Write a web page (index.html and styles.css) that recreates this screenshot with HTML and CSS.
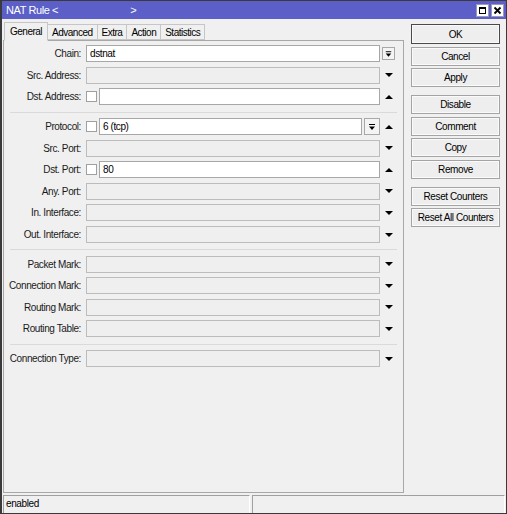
FILE: index.html
```html
<!DOCTYPE html>
<html lang="en">
<head>
    <meta charset="UTF-8">
    <title>NAT Rule</title>
    <link rel="stylesheet" href="styles.css">
</head>
<body>
    <div class="window">
        <div class="titleBar">
            <span class="title">NAT Rule &lt;</span>
            <span class="titleEnd">&gt;</span>
            <span class="winBtn">
                <svg width="11" height="11" viewBox="0 0 11 11"><rect x="2.5" y="2.5" width="6" height="6" fill="none" stroke="#000"/><line x1="2" y1="3" x2="9" y2="3" stroke="#000" stroke-width="2"/></svg>
            </span>
            <span class="winBtn">
                <svg width="11" height="11" viewBox="0 0 11 11"><path d="M2.5 2.5 L8.5 8.5 M8.5 2.5 L2.5 8.5" stroke="#000" stroke-width="1.8"/></svg>
            </span>
        </div>

        <div class="main">
            <div class="leftCol">
                <ul class="tabs">
                    <li class="active">General</li>
                    <li>Advanced</li>
                    <li>Extra</li>
                    <li>Action</li>
                    <li>Statistics</li>
                </ul>
                <div class="panel">
                    <div class="group">
                        <div class="row">
                            <label>Chain:</label>
                            <div class="cell"><div class="field on">dstnat</div></div>
                            <span class="combo"><svg width="12" height="12" viewBox="0 0 12 12"><line x1="3" y1="3.5" x2="9" y2="3.5" stroke="#000"/><polygon points="3,5.5 9,5.5 6,9" fill="#000"/></svg></span>
                        </div>
                        <div class="row">
                            <label>Src. Address:</label>
                            <div class="cell"><div class="field"></div></div>
                            <span class="arrow"><svg width="15" height="10" viewBox="0 0 15 10"><polygon points="3,3 11,3 7,7" fill="#000"/></svg></span>
                        </div>
                        <div class="row">
                            <label>Dst. Address:</label>
                            <div class="cell"><span class="check"></span><div class="field on"></div></div>
                            <span class="arrow"><svg width="15" height="10" viewBox="0 0 15 10"><polygon points="3,7 11,7 7,3" fill="#000"/></svg></span>
                        </div>
                    </div>
                    <div class="divider"></div>
                    <div class="group">
                        <div class="row">
                            <label>Protocol:</label>
                            <div class="cell"><span class="check"></span><div class="field on">6 (tcp)</div><span class="combo wide"><svg width="12" height="12" viewBox="0 0 12 12"><line x1="3" y1="3.5" x2="9" y2="3.5" stroke="#000"/><polygon points="3,5.5 9,5.5 6,9" fill="#000"/></svg></span></div>
                            <span class="arrow"><svg width="15" height="10" viewBox="0 0 15 10"><polygon points="3,7 11,7 7,3" fill="#000"/></svg></span>
                        </div>
                        <div class="row">
                            <label>Src. Port:</label>
                            <div class="cell"><div class="field"></div></div>
                            <span class="arrow"><svg width="15" height="10" viewBox="0 0 15 10"><polygon points="3,3 11,3 7,7" fill="#000"/></svg></span>
                        </div>
                        <div class="row">
                            <label>Dst. Port:</label>
                            <div class="cell"><span class="check"></span><div class="field on">80</div></div>
                            <span class="arrow"><svg width="15" height="10" viewBox="0 0 15 10"><polygon points="3,7 11,7 7,3" fill="#000"/></svg></span>
                        </div>
                        <div class="row">
                            <label>Any. Port:</label>
                            <div class="cell"><div class="field"></div></div>
                            <span class="arrow"><svg width="15" height="10" viewBox="0 0 15 10"><polygon points="3,3 11,3 7,7" fill="#000"/></svg></span>
                        </div>
                        <div class="row">
                            <label>In. Interface:</label>
                            <div class="cell"><div class="field"></div></div>
                            <span class="arrow"><svg width="15" height="10" viewBox="0 0 15 10"><polygon points="3,3 11,3 7,7" fill="#000"/></svg></span>
                        </div>
                        <div class="row">
                            <label>Out. Interface:</label>
                            <div class="cell"><div class="field"></div></div>
                            <span class="arrow"><svg width="15" height="10" viewBox="0 0 15 10"><polygon points="3,3 11,3 7,7" fill="#000"/></svg></span>
                        </div>
                    </div>
                    <div class="divider"></div>
                    <div class="group">
                        <div class="row">
                            <label>Packet Mark:</label>
                            <div class="cell"><div class="field"></div></div>
                            <span class="arrow"><svg width="15" height="10" viewBox="0 0 15 10"><polygon points="3,3 11,3 7,7" fill="#000"/></svg></span>
                        </div>
                        <div class="row">
                            <label>Connection Mark:</label>
                            <div class="cell"><div class="field"></div></div>
                            <span class="arrow"><svg width="15" height="10" viewBox="0 0 15 10"><polygon points="3,3 11,3 7,7" fill="#000"/></svg></span>
                        </div>
                        <div class="row">
                            <label>Routing Mark:</label>
                            <div class="cell"><div class="field"></div></div>
                            <span class="arrow"><svg width="15" height="10" viewBox="0 0 15 10"><polygon points="3,3 11,3 7,7" fill="#000"/></svg></span>
                        </div>
                        <div class="row">
                            <label>Routing Table:</label>
                            <div class="cell"><div class="field"></div></div>
                            <span class="arrow"><svg width="15" height="10" viewBox="0 0 15 10"><polygon points="3,3 11,3 7,7" fill="#000"/></svg></span>
                        </div>
                    </div>
                    <div class="divider"></div>
                    <div class="group">
                        <div class="row">
                            <label>Connection Type:</label>
                            <div class="cell"><div class="field"></div></div>
                            <span class="arrow"><svg width="15" height="10" viewBox="0 0 15 10"><polygon points="3,3 11,3 7,7" fill="#000"/></svg></span>
                        </div>
                    </div>
                </div>
            </div>

            <div class="rightCol">
                <div class="btnGroup">
                    <button class="btn default">OK</button>
                    <button class="btn">Cancel</button>
                    <button class="btn">Apply</button>
                </div>
                <div class="btnGroup">
                    <button class="btn">Disable</button>
                    <button class="btn">Comment</button>
                    <button class="btn">Copy</button>
                    <button class="btn">Remove</button>
                </div>
                <div class="btnGroup">
                    <button class="btn">Reset Counters</button>
                    <button class="btn">Reset All Counters</button>
                </div>
            </div>
        </div>

        <div class="statusBar">
            <div class="statusBox first">enabled</div>
            <div class="statusBox"></div>
        </div>
    </div>
</body>
</html>
```

FILE: styles.css
```css
html, body {
    margin: 0;
    padding: 0;
    width: 507px;
    height: 514px;
    overflow: hidden;
    background-color: #f0f0f0;
}
body {
    font-family: "Liberation Sans", Arial, sans-serif;
    font-size: 10px;
    letter-spacing: -0.4px;
    color: #000;
}
.window {
    box-sizing: border-box;
    width: 507px;
    height: 514px;
    border: 1px solid #3a3a3a;
    border-left-width: 2px;
    display: flex;
    flex-direction: column;
    background-color: #f0f0f0;
}
.titleBar {
    height: 18px;
    flex: none;
    display: flex;
    align-items: center;
    background-color: #5b5fc7;
    color: #fff;
    font-size: 11px;
    padding-left: 4px;
}
.titleEnd {
    margin-left: 72px;
}
.winBtn {
    width: 11px;
    height: 11px;
    background-color: #fff;
    outline: 1px solid #9a9ab8;
    display: flex;
}
.titleEnd + .winBtn {
    margin-left: auto;
    margin-right: 4px;
}
.winBtn:last-child {
    margin-right: 3px;
}
.main {
    flex: 1;
    display: flex;
    min-height: 0;
}
.leftCol {
    width: 401px;
    margin-left: 1px;
    display: flex;
    flex-direction: column;
}
.tabs {
    list-style: none;
    margin: 0;
    padding: 3px 0 0 1px;
    display: flex;
    align-items: flex-end;
    position: relative;
    z-index: 2;
}
.tabs li {
    box-sizing: border-box;
    height: 16px;
    line-height: 15px;
    padding: 0 4px;
    letter-spacing: -0.5px;
    border: 1px solid #c6c6c6;
    border-left: none;
    background-color: #f0f0f0;
}
.tabs li.active {
    height: 19px;
    line-height: 17px;
    border-left: 1px solid #c6c6c6;
    border-bottom-color: #f0f0f0;
    padding: 0 5px;
    margin-bottom: -1px;
}
.panel {
    flex: 1;
    border: 1px solid #a8a8a8;
    margin-bottom: 1px;
}
.group {
    padding: 2px 0 4px;
}
.divider + .group {
    padding-top: 3px;
}
.divider {
    border-top: 1px solid #dadada;
    margin: 0 6px;
}
.row {
    height: 21.6px;
    display: grid;
    grid-template-columns: 77px 294px 16px;
    column-gap: 5px;
    align-items: center;
}
.row label {
    text-align: right;
    white-space: nowrap;
    color: #1a1a1a;
}
.row .arrow,
.row .combo {
    margin-left: -3px;
}
.cell {
    display: flex;
    align-items: center;
    gap: 2px;
}
.field {
    flex: 1;
    box-sizing: border-box;
    height: 17px;
    line-height: 15px;
    padding-left: 3px;
    border: 1px solid #bcbcbc;
    background-color: #efefef;
}
.field.on {
    background-color: #fff;
    border-color: #a7a7a7;
}
.check {
    box-sizing: border-box;
    width: 11px;
    height: 11px;
    border: 1px solid #a0a0a0;
    background-color: #fff;
}
.combo {
    box-sizing: border-box;
    width: 13px;
    height: 13px;
    border: 1px solid #a8a8a8;
    background-color: #f4f4f4;
    display: flex;
    align-items: center;
    justify-content: center;
}
.combo.wide {
    width: 16px;
    height: 17px;
    margin-left: 0;
}
.arrow {
    display: flex;
    align-items: center;
}
.rightCol {
    flex: 1;
    padding: 5px 5px 0 7px;
}
.btnGroup {
    display: flex;
    flex-direction: column;
    gap: 2.5px;
    margin-bottom: 8px;
}
.btn {
    box-sizing: border-box;
    height: 19px;
    width: 89px;
    padding: 0;
    font-family: "Liberation Sans", Arial, sans-serif;
    font-size: 10px;
    letter-spacing: -0.4px;
    color: #000;
    background-color: #eeeeee;
    border: 1px solid #a4a4a4;
    box-shadow: inset 0 0 0 1px #fafafa;
}
.btn.default {
    height: 20px;
    border-color: #4a4a4a;
}
.statusBar {
    flex: none;
    height: 18px;
    display: flex;
    gap: 2px;
    padding: 1px 1px 0 1px;
}
.statusBox {
    flex: 1;
    box-sizing: border-box;
    border-top: 1px solid #a0a0a0;
    border-left: 1px solid #a0a0a0;
    border-right: 1px solid #fff;
    line-height: 16px;
    padding-left: 2px;
}
.statusBox.first {
    flex: none;
    width: 247px;
}
```
